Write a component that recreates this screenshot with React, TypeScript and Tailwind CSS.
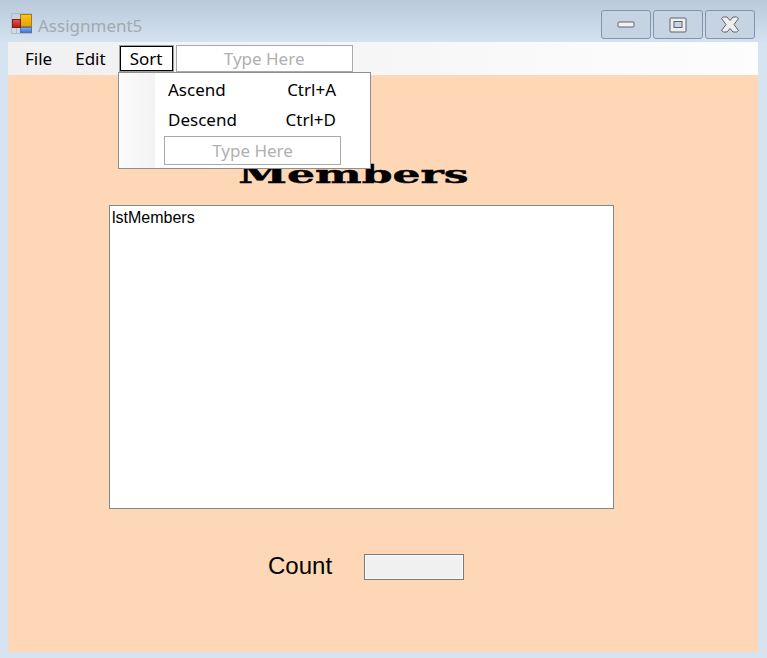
export default function App() {
  const ui = "font-['Noto_Sans',sans-serif]";
  return (
    <div className={`relative w-[767px] h-[658px] overflow-hidden flex flex-col bg-[#d6e4f2] ${ui}`}>
      {/* Title bar */}
      <div className="h-[42px] shrink-0 flex bg-gradient-to-b from-[#b9c9d9] to-[#d4e2f1] pl-[11px] pr-[12px]">
        <svg width="22" height="22" viewBox="0 0 22 22" className="mt-[13px] shrink-0">
          <defs>
            <linearGradient id="y" x1="0" y1="0" x2="0" y2="1"><stop offset="0" stopColor="#f8c820" /><stop offset="1" stopColor="#e8a000" /></linearGradient>
            <linearGradient id="b" x1="0" y1="0" x2="0" y2="1"><stop offset="0" stopColor="#7fb2f2" /><stop offset="1" stopColor="#3b74d8" /></linearGradient>
            <linearGradient id="r" x1="0" y1="0" x2="0" y2="1"><stop offset="0" stopColor="#e85848" /><stop offset="1" stopColor="#b81810" /></linearGradient>
          </defs>
          <g fill="none" stroke="#b5bcc4" strokeWidth="1">
            <rect x="0.5" y="0.5" width="20" height="20" />
            <path d="M0.5 14.5H9M5.5 14.5V20.5" />
          </g>
          <rect x="9.5" y="1.5" width="11" height="12" fill="url(#y)" stroke="#a97c10" />
          <rect x="9.5" y="14.5" width="11" height="5" fill="url(#b)" stroke="#4a74b5" />
          <rect x="1.5" y="6.5" width="8" height="8" fill="url(#r)" stroke="#7d2018" />
        </svg>
        <div className="ml-[5px] mt-[13px] text-[17px] leading-[26px] text-[#a3a9b0]">Assignment5</div>
        <div className="ml-auto mt-[10px] flex gap-[2px] h-[29px]">
          <div className="w-[50px] rounded-[3px] border border-[#8393ab] bg-[#c5d3e3] flex items-center justify-center">
            <svg width="18" height="8" viewBox="0 0 18 8">
              <rect x="1" y="1" width="16" height="5" rx="1" fill="#f2f2f2" stroke="#5c6270" />
            </svg>
          </div>
          <div className="w-[50px] rounded-[3px] border border-[#8393ab] bg-[#c5d3e3] flex items-center justify-center">
            <svg width="18" height="16" viewBox="0 0 18 16">
              <rect x="1" y="1" width="16" height="14" rx="1" fill="#eeeeee" stroke="#5c6270" />
              <rect x="5" y="4.5" width="8" height="6" fill="#c5d3e3" stroke="#5c6270" />
            </svg>
          </div>
          <div className="w-[50px] rounded-[3px] border border-[#8393ab] bg-[#c5d3e3] flex items-center justify-center">
            <svg width="20" height="17" viewBox="0 0 20 17">
              <path d="M1.5 2.5 3.5 1H7L10 4.5 13 1h3.5l2 1.5L14 8.5l4.5 6-2 1.5H13l-3-3.5L7 16H3.5l-2-1.5L6 8.5Z" fill="#efefef" stroke="#5c6270" />
            </svg>
          </div>
        </div>
      </div>

      {/* Client area */}
      <div className="relative ml-[8px] mr-[9px] mb-[6px] flex-1 flex flex-col bg-[#fed8b6]">
        <div className="h-[33px] shrink-0 flex items-start bg-gradient-to-r from-[#f0f0f0] to-[#fdfdfd] text-[17px] text-black">
          <div className="ml-[17px] mt-[4px] leading-[26px]">File</div>
          <div className="ml-[23px] mt-[4px] leading-[26px]">Edit</div>
          <div className="ml-[14px] mt-[4px] w-[53px] h-[25px] border border-black bg-white outline outline-1 outline-[#a0a0a0] flex items-center justify-center">Sort</div>
          <div className="ml-[3px] mt-[3px] w-[177px] h-[27px] border border-[#a9a9a9] bg-white text-[#b0b0b0] flex items-center justify-center">Type Here</div>
        </div>

        <div className="h-[130px] shrink-0 flex justify-center items-end pr-[59px]">
          <h1 className="font-['DejaVu_Serif',serif] font-bold text-[30px] leading-[30px] text-black mb-[18px] scale-x-[1.47] scale-y-[0.8] origin-bottom [-webkit-text-stroke:0.5px_black]">Members</h1>
        </div>

        <div className="ml-[101px] w-[505px] h-[304px] border border-[#82878c] bg-white pl-[2px] pt-[1px] font-['Liberation_Sans',sans-serif] text-[16px] leading-[22px] text-black">lstMembers</div>

        <div className="mt-[45px] ml-[260px] flex items-center h-[26px]">
          <span className="font-['Liberation_Sans',sans-serif] text-[24px] leading-[24px] text-black w-[96px] -mt-[3px]">Count</span>
          <div className="w-[100px] h-[26px] border border-[#7a7a7a] bg-[#f0f0f0] shadow-[inset_0_0_0_1px_#fafafa]"></div>
        </div>

        {/* Dropdown menu */}
        <div className="absolute left-[110px] top-[30px] w-[253px] h-[97px] border border-[#8f8f8f] bg-white flex text-[17px] text-black">
          <div className="w-[36px] shrink-0 bg-gradient-to-r from-[#fbfbfb] to-[#f3f3f3]"></div>
          <div className="flex-1 flex flex-col">
            <div className="h-[30px] mt-[2px] flex items-center justify-between pl-[13px] pr-[34px]"><span>Ascend</span><span>Ctrl+A</span></div>
            <div className="h-[30px] flex items-center justify-between pl-[13px] pr-[34px]"><span>Descend</span><span>Ctrl+D</span></div>
            <div className="ml-[9px] mt-[1px] w-[177px] h-[29px] border border-[#a9a9a9] text-[#b0b0b0] flex items-center justify-center">Type Here</div>
          </div>
        </div>
      </div>
    </div>
  );
}
